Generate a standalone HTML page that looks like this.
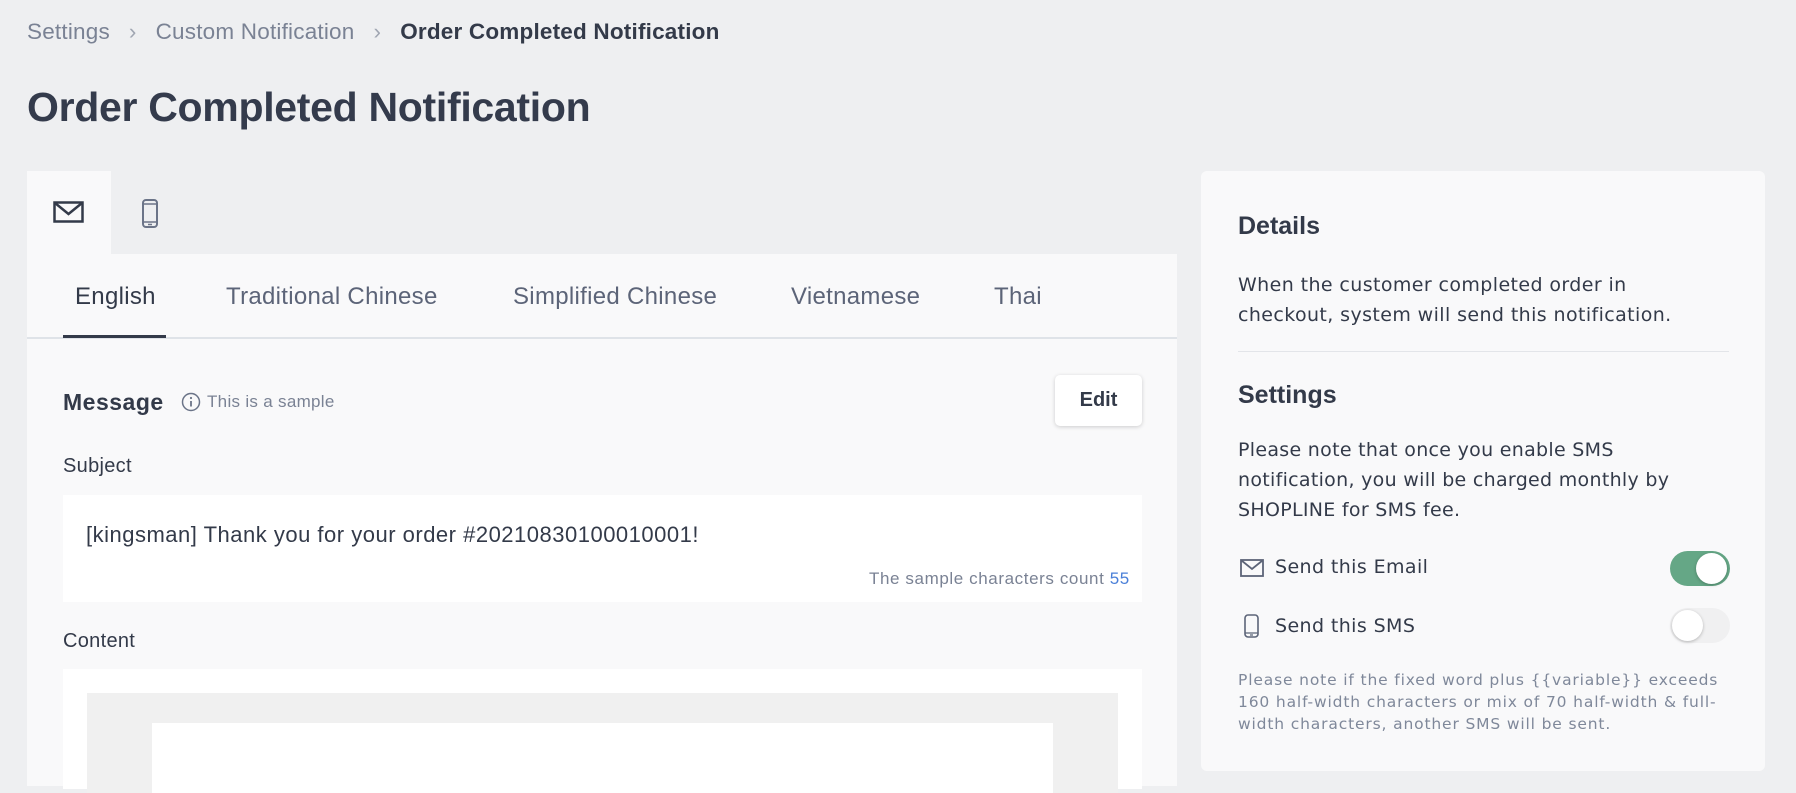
<!DOCTYPE html>
<html><head><meta charset="utf-8"><style>
*{box-sizing:border-box;margin:0;padding:0}
body{width:1796px;height:786px;overflow:hidden;background:#eeeff1;font-family:"Liberation Sans",sans-serif;color:#333a49;position:relative}
.a{position:absolute;white-space:nowrap}
.bc{top:19px;left:27px;font-size:22.5px;color:#7a8294;letter-spacing:0.2px}
.bc b{color:#333a49}
.bc .s{margin:0 19px;color:#a0a6b2}
h1{position:absolute;left:27px;top:84px;font-size:41px;font-weight:bold;color:#343b4c;letter-spacing:-0.3px}
.lp{position:absolute;left:27px;top:171px;width:1150px;height:615px;background:#f9f9fa}
.tabs{position:absolute;left:0;top:0;width:1150px;height:83px;background:#eeeff1}
.tabact{position:absolute;left:0;top:0;width:84px;height:83px;background:#f9f9fa}
.lang{position:absolute;top:83px;left:0;width:1150px;height:85px;border-bottom:2px solid #dfe3e8}
.lang span{position:absolute;top:29px;font-size:24px;color:#5c6478;letter-spacing:0.3px}
.rp{position:absolute;left:1201px;top:171px;width:564px;height:600px;background:#f9f9fa;border-radius:6px}
.rp .t{font-family:"DejaVu Sans",sans-serif}
.tog{position:absolute;width:60px;height:35px;border-radius:18px}
.knob{position:absolute;top:2px;width:31px;height:31px;border-radius:50%;background:#fff;box-shadow:0 1px 3px rgba(0,0,0,.25)}
</style></head><body>
<div class="a bc">Settings<span class="s">›</span>Custom Notification<span class="s">›</span><b>Order Completed Notification</b></div>
<h1>Order Completed Notification</h1>
<div class="lp">
 <div class="tabs"><div class="tabact"></div>
  <svg class="a" style="left:26px;top:30px" width="31" height="22" viewBox="0 0 31 22"><rect x="1.5" y="1.5" width="28" height="19" fill="none" stroke="#333a49" stroke-width="2.5"/><path d="M2 2 L15.5 13 L29 2" fill="none" stroke="#333a49" stroke-width="2.5"/></svg>
  <svg class="a" style="left:115px;top:28px" width="16" height="29" viewBox="0 0 16 29"><rect x="1" y="1" width="14" height="27" rx="3" fill="none" stroke="#6b7488" stroke-width="2"/><path d="M1 5H15M1 23H15M6 25.5H10" stroke="#6b7488" stroke-width="1.5"/></svg>
 </div>
 <div class="lang">
  <span style="left:48px;color:#333a49">English</span>
  <span style="left:199px">Traditional Chinese</span>
  <span style="left:486px">Simplified Chinese</span>
  <span style="left:764px">Vietnamese</span>
  <span style="left:967px">Thai</span>
  <div class="a" style="left:36px;top:81px;width:103px;height:3px;background:#333a49"></div>
 </div>
 <div class="a" style="left:36px;top:218px;font-size:23px;font-weight:bold;letter-spacing:0.5px">Message</div>
 <svg class="a" style="left:154px;top:221px" width="20" height="20" viewBox="0 0 20 20"><circle cx="10" cy="10" r="8.5" fill="none" stroke="#6b7488" stroke-width="1.5"/><path d="M10 9v5.5" stroke="#6b7488" stroke-width="1.8"/><circle cx="10" cy="6" r="1.1" fill="#6b7488"/></svg>
 <div class="a" style="left:180px;top:221px;font-size:17px;color:#7a8294;letter-spacing:0.3px">This is a sample</div>
 <div class="a" style="left:1028px;top:204px;width:87px;height:51px;background:#fff;border-radius:5px;box-shadow:0 1px 4px rgba(0,0,0,.18);font-size:20px;font-weight:bold;text-align:center;line-height:51px">Edit</div>
 <div class="a" style="left:36px;top:284px;font-size:20px;letter-spacing:0.3px">Subject</div>
 <div class="a" style="left:36px;top:324px;width:1079px;height:107px;background:#fff"></div>
 <div class="a" style="left:59px;top:351px;font-size:22px;letter-spacing:0.5px">[kingsman] Thank you for your order #20210830100010001!</div>
 <div class="a" style="left:842px;top:398px;font-size:17px;color:#7a8294;letter-spacing:0.6px">The sample characters count <span style="color:#4a7fd8">55</span></div>
 <div class="a" style="left:36px;top:459px;font-size:20px;letter-spacing:0.3px">Content</div>
 <div class="a" style="left:36px;top:498px;width:1079px;height:120px;background:#fff"></div>
 <div class="a" style="left:60px;top:522px;width:1031px;height:100px;background:#f0f0f0"></div>
 <div class="a" style="left:125px;top:552px;width:901px;height:70px;background:#fff"></div>
</div>
<div class="rp">
 <div class="a" style="left:37px;top:41px;font-size:25px;font-weight:bold">Details</div>
 <div class="a t" style="left:37px;top:99px;font-size:19px;line-height:30px;letter-spacing:0.4px">When the customer completed order in<br>checkout, system will send this notification.</div>
 <div class="a" style="left:37px;top:180px;width:491px;height:1px;background:#e3e5e9"></div>
 <div class="a" style="left:37px;top:210px;font-size:25px;font-weight:bold">Settings</div>
 <div class="a t" style="left:37px;top:264px;font-size:19px;line-height:30px;letter-spacing:0.3px">Please note that once you enable SMS<br>notification, you will be charged monthly by<br>SHOPLINE for SMS fee.</div>
 <svg class="a" style="left:39px;top:388px" width="24" height="18" viewBox="0 0 24 18"><rect x="1" y="1" width="22" height="16" fill="none" stroke="#5c6478" stroke-width="1.8"/><path d="M1.5 1.5L12 10L22.5 1.5" fill="none" stroke="#5c6478" stroke-width="1.8"/></svg>
 <div class="a t" style="left:74px;top:385px;font-size:19px;letter-spacing:0.4px">Send this Email</div>
 <div class="tog" style="left:469px;top:380px;background:#65a786"><div class="knob" style="left:26px"></div></div>
 <svg class="a" style="left:43px;top:443px" width="15" height="24" viewBox="0 0 15 24"><rect x="1" y="1" width="13" height="22" rx="3" fill="none" stroke="#5c6478" stroke-width="1.6"/><path d="M1 19H14M6 21H9" stroke="#5c6478" stroke-width="1.3"/></svg>
 <div class="a t" style="left:74px;top:444px;font-size:19px;letter-spacing:0.4px">Send this SMS</div>
 <div class="tog" style="left:469px;top:437px;background:#f0f0f1"><div class="knob" style="left:2px"></div></div>
 <div class="a t" style="left:37px;top:498px;font-size:15.5px;line-height:22px;color:#7f889a;letter-spacing:0.85px">Please note if the fixed word plus {{variable}} exceeds<br>160 half-width characters or mix of 70 half-width &amp; full-<br>width characters, another SMS will be sent.</div>
</div>
</body></html>
